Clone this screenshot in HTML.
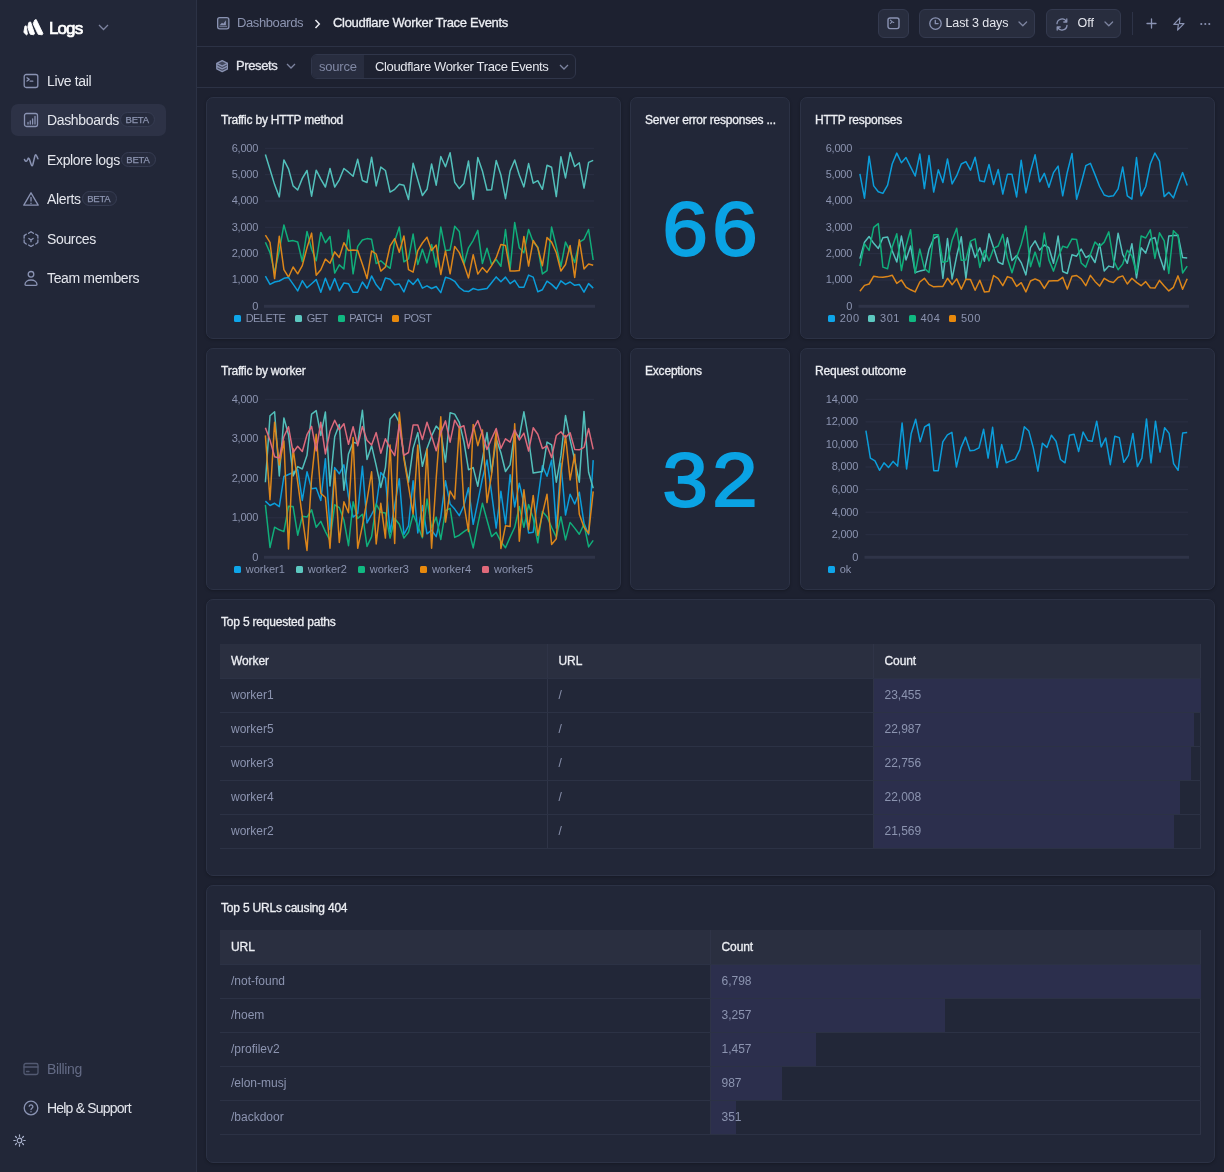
<!DOCTYPE html>
<html><head><meta charset="utf-8"><style>
*{box-sizing:border-box}
html,body{margin:0;padding:0}
body{width:1224px;height:1172px;overflow:hidden;background:#1d2130;font-family:"Liberation Sans",sans-serif;position:relative;color:#e8eaf0}
#side,#hdr,#bar,.panel{will-change:transform}
.abs{position:absolute}
#side{position:absolute;left:0;top:0;width:197px;height:1172px;background:#222738;border-right:1px solid #2c3245}
.logo{position:absolute;left:23px;top:19px}
.logotxt{position:absolute;left:49px;top:19px;font-weight:400;font-size:17px;-webkit-text-stroke:0.7px #fff;letter-spacing:-0.9px;color:#fff;line-height:20px}
.nav{position:absolute;left:11px;width:155px;height:32px;border-radius:7px}
.nav.active{background:#2d3246}
.nav svg{position:absolute;left:12px;top:8px}
.nav .lbl{position:absolute;left:36px;top:8px;font-size:14px;line-height:16px;letter-spacing:-0.35px;color:#e4e6ed;white-space:nowrap}
.beta{display:inline-block;margin-left:1px;border:1px solid #363c52;background:#262b3d;border-radius:8px;font-size:9.5px;-webkit-text-stroke:0.25px #8c94b0;letter-spacing:-0.2px;color:#8c94b0;padding:0 5px 0 4.5px;line-height:13px;height:15px;vertical-align:2px}
#hdr{position:absolute;left:197px;top:0;width:1027px;height:47px;border-bottom:1px solid #2c3245}
#bar{position:absolute;left:197px;top:47px;width:1027px;height:41px;border-bottom:1px solid #2c3245}
.btn{position:absolute;top:9px;height:29px;border:1px solid #343a4f;background:#282d3e;border-radius:6px}
.panel{position:absolute;background:#222738;border:1px solid #2c3245;border-radius:7px;box-shadow:0 1px 3px rgba(0,0,0,0.25)}
.ptitle{position:absolute;left:14px;top:15px;font-size:12px;font-weight:400;-webkit-text-stroke:0.3px #eceef3;letter-spacing:-0.2px;color:#eceef3;white-space:nowrap;line-height:14px}
.tick{font-size:11px;fill:#8c94b0;letter-spacing:-0.25px;font-family:"Liberation Sans",sans-serif}
.legend{position:absolute;left:27px;top:214px;font-size:11px;line-height:13px;color:#8c94b0;white-space:nowrap}
.li{display:inline-block;margin-right:8.2px;letter-spacing:0px}
.li.up{letter-spacing:-0.55px;margin-right:6.8px}
.li.dig{letter-spacing:0.5px;margin-right:5.8px}
.li i{display:inline-block;width:7px;height:7px;border-radius:1.5px;margin-right:4.7px;vertical-align:0px;letter-spacing:0}
.big{position:absolute;left:0;width:158px;text-align:center;font-size:76px;color:#0aa3e4;-webkit-text-stroke:2.1px #0aa3e4;line-height:80px;letter-spacing:4px;text-indent:4px;transform:scaleX(1.07)}
table{border-collapse:collapse;position:absolute;left:13px;table-layout:fixed}
th{background:#2a2f40;color:#eceef3;font-weight:400;-webkit-text-stroke:0.3px #eceef3;font-size:12px;letter-spacing:-0.1px;text-align:left;height:34px;padding:0 0 0 11px;border-bottom:1px solid #2c3245}
td{color:#8c94b0;font-size:12px;height:34px;padding:0 0 0 11px;border-bottom:1px solid #2c3245;position:relative}
td.c{padding:0}
.barw{position:absolute;left:0;top:0;bottom:0;background:#2c2f4d}
.num{position:absolute;left:11px;top:0;line-height:33px}
</style></head><body>
<div id="side"><svg class="abs" style="left:20px;top:15px" width="28" height="24" viewBox="0 0 28 24" fill="#fff" stroke="#fff" stroke-width="0.9" stroke-linejoin="round"><path d="M5 11L6.2 10.9 7.4 19.2 6.6 19.9 4.3 18 3.9 16.9Z"/><path d="M8.9 7.4L10.6 7 14.6 18.8 13.6 19.7 10.4 19.3 9.9 18.4 7.8 12.6 7.8 11.8Z"/><path d="M14.8 5L16.2 4.6 22.9 18.4 22.2 19.8 18.2 19.3 17.8 18.6 13.3 9.1 13.3 8.4Z"/></svg><div class="logotxt">Logs</div><svg class="abs" style="left:98px;top:24px" width="11" height="7" viewBox="0 0 11 7"><path d="M1 1l4.5 4.5L10 1" fill="none" stroke="#7d84a0" stroke-width="1.3"/></svg><div class="nav" style="top:64.5px"><svg width="16" height="16" viewBox="0 0 16 16" fill="none" stroke="#8a93b3" stroke-width="1.3" stroke-linecap="round" stroke-linejoin="round"><rect x="1.2" y="1.5" width="13.6" height="13" rx="2"/><path d="M4 4.8l2.2 1.6L4 8M7.2 8.2h2.6"/></svg><div class="lbl">Live tail</div></div><div class="nav active" style="top:104px"><svg width="16" height="16" viewBox="0 0 16 16" fill="none" stroke="#8a93b3" stroke-width="1.3" stroke-linecap="round" stroke-linejoin="round"><rect x="1.5" y="1.5" width="13" height="13" rx="2"/><path d="M5 12v-1.5M7.3 12V9M9.6 12V6.8M12 12V4.5"/></svg><div class="lbl">Dashboards<span class=beta>BETA</span></div></div><div class="nav" style="top:143.5px"><svg width="16" height="16" viewBox="0 0 16 16" fill="none" stroke="#8a93b3" stroke-width="1.3" stroke-linecap="round" stroke-linejoin="round"><path stroke-width="1.5" d="M1.5 7.4C2.3 9.6 3.6 10.2 4.6 7.6 5.3 5.6 5.9 5.6 6.6 7.8L8.2 12.6C8.7 14.2 9.4 14 9.9 12.2L11.9 4C12.4 2.2 13 2.3 13.6 3.8L14.9 6.8"/></svg><div class="lbl">Explore logs<span class=beta>BETA</span></div></div><div class="nav" style="top:183px"><svg width="16" height="16" viewBox="0 0 16 16" fill="none" stroke="#8a93b3" stroke-width="1.3" stroke-linecap="round" stroke-linejoin="round"><path d="M8 1.8L15.2 14.2H0.8Z"/><path d="M8 6.5v3.5M8 12.2v.2"/></svg><div class="lbl">Alerts<span class=beta>BETA</span></div></div><div class="nav" style="top:222.5px"><svg width="16" height="16" viewBox="0 0 16 16" fill="none" stroke="#8a93b3" stroke-width="1.3" stroke-linecap="round" stroke-linejoin="round"><path d="M5.6 2.3L8 .7l2.4 1.6M3.2 3.2L1.2 4.6 1.1 7.2M12.8 3.2l2 1.4.1 2.6M1.1 8.9l.1 2.6 2 1.5M14.9 8.9l-.1 2.6-2 1.5M5.6 14L8 15.5l2.4-1.5M5.9 7.5L8 9l2.1-1.5M8 9v1.7"/></svg><div class="lbl">Sources</div></div><div class="nav" style="top:262px"><svg width="16" height="16" viewBox="0 0 16 16" fill="none" stroke="#8a93b3" stroke-width="1.3" stroke-linecap="round" stroke-linejoin="round"><circle cx="8" cy="4.3" r="2.8"/><path d="M2 14.5c0-2.8 2.7-4.5 6-4.5s6 1.7 6 4.5c0 .6-.4.8-1 .8H3c-.6 0-1-.2-1-.8z"/></svg><div class="lbl">Team members</div></div><div class="nav" style="top:1053px"><svg width="16" height="16" viewBox="0 0 16 16" fill="none" stroke="#535a72" stroke-width="1.3" stroke-linecap="round" stroke-linejoin="round"><rect x="1" y="2.5" width="14" height="11" rx="1.8"/><path d="M1 6h14M3.5 10.5h2.5"/></svg><div class="lbl" style="color:#646b85">Billing</div></div><div class="nav" style="top:1092px"><svg width="16" height="16" viewBox="0 0 16 16" fill="none" stroke="#8a93b3" stroke-width="1.3" stroke-linecap="round" stroke-linejoin="round"><circle cx="8" cy="8" r="6.8"/><path d="M6.2 6.2a1.9 1.9 0 0 1 3.7.6c0 1.3-1.9 1.6-1.9 2.8M8 11.6v.2"/></svg><div class="lbl" style="letter-spacing:-0.8px">Help &amp; Support</div></div><svg class="abs" style="left:13px;top:1134px" width="13" height="13" viewBox="0 0 13 13" fill="none" stroke="#aab2cc" stroke-width="1.2" stroke-linecap="round"><circle cx="6.5" cy="6.5" r="2.3"/><path d="M6.5 .8v1.5M6.5 10.7v1.5M.8 6.5h1.5M10.7 6.5h1.5M2.5 2.5l1 1M9.5 9.5l1 1M2.5 10.5l1-1M9.5 3.5l1-1"/></svg></div>
<div id="hdr"><svg class="abs" style="left:20px;top:17.3px" width="12.5" height="12.5" viewBox="0 0 12.5 12.5"><rect x=".65" y=".65" width="11.2" height="11.2" rx="2" fill="rgba(138,147,179,0.18)" stroke="#8a93b3" stroke-width="1.3"/><path d="M2.6 8.2L5 5.8l1.3.9 2.6-3.4v4.9z" fill="#8a93b3"/><path d="M2.4 9.4h7.6" stroke="#6d7490" stroke-width="1.1"/></svg><div class="abs" style="left:40px;top:15px;font-size:13px;line-height:15px;color:#8c94b0;letter-spacing:-0.4px">Dashboards</div><svg class="abs" style="left:116.5px;top:18.5px" width="7" height="10" viewBox="0 0 7 10"><path d="M1.5 1l3.8 4-3.8 4" fill="none" stroke="#e8eaf0" stroke-width="1.5"/></svg><div class="abs" style="left:136px;top:15px;font-size:13px;line-height:15px;-webkit-text-stroke:0.3px #eceef3;color:#eceef3;letter-spacing:-0.3px">Cloudflare Worker Trace Events</div><div class="btn" style="left:681px;width:31px"><svg class="abs" style="left:8.2px;top:7.4px" width="13" height="13" viewBox="0 0 13 13" fill="none" stroke="#8a93b3" stroke-width="1.4"><rect x="1" y="1" width="11" height="10.6" rx="2"/><path d="M3.4 3.2l1.8 1.6-1.8 1.6" stroke-width="1.1" stroke-linecap="round"/><path d="M5.6 5.4h1.6" stroke-width="1.1"/></svg></div><div class="btn" style="left:722px;width:116px"><svg class="abs" style="left:8.5px;top:7px" width="13" height="13" viewBox="0 0 13 13" fill="none" stroke="#8a93b3" stroke-width="1.3" stroke-linecap="round"><circle cx="6.5" cy="6.6" r="5.7"/><path d="M6.3 3.4v3.2h2.8"/></svg><div class="abs" style="left:25.5px;top:6px;font-size:12.5px;line-height:15px;color:#e4e6ed;letter-spacing:-0.1px">Last 3 days</div><svg class="abs" style="left:97.7px;top:10.7px" width="10" height="7" viewBox="0 0 10 7"><path d="M1 1l3.8 3.8L8.6 1" fill="none" stroke="#7d84a0" stroke-width="1.3" stroke-linecap="round" stroke-linejoin="round"/></svg></div><div class="btn" style="left:849px;width:75px"><svg class="abs" style="left:7.8px;top:7.7px" width="14" height="13" viewBox="0 0 14 13" fill="none" stroke="#8a93b3" stroke-width="1.3" stroke-linecap="round" stroke-linejoin="round"><path d="M2 5.6A5 5 0 0 1 11.4 3.6M12 7.4A5 5 0 0 1 2.6 9.4M11.8 1v3h-3M2.2 12V9h3"/></svg><div class="abs" style="left:30.5px;top:6px;font-size:12.5px;line-height:15px;color:#e4e6ed">Off</div><svg class="abs" style="left:56.5px;top:10.7px" width="10" height="7" viewBox="0 0 10 7"><path d="M1 1l3.8 3.8L8.6 1" fill="none" stroke="#7d84a0" stroke-width="1.3" stroke-linecap="round" stroke-linejoin="round"/></svg></div><div class="abs" style="left:935px;top:12px;width:1px;height:23px;background:#2d3347"></div><svg class="abs" style="left:948.5px;top:17.8px" width="11" height="11" viewBox="0 0 11 11" stroke="#8a93b3" stroke-width="1.3" stroke-linecap="round"><path d="M5.5 1v9M1 5.5h9"/></svg><svg class="abs" style="left:975.5px;top:16.5px" width="12" height="14" viewBox="0 0 12 14" fill="none" stroke="#8a93b3" stroke-width="1.2" stroke-linejoin="round"><path d="M7 .8L.8 7.4h4.6L4.6 13.2l6.4-6.6H6.4z"/></svg><svg class="abs" style="left:1003px;top:21.5px" width="11" height="4" viewBox="0 0 11 4" fill="#8a93b3"><circle cx="1.3" cy="2" r="1.05"/><circle cx="5.3" cy="2" r="1.05"/><circle cx="9.3" cy="2" r="1.05"/></svg></div>
<div id="bar"><svg class="abs" style="left:19px;top:13.2px" width="12.4" height="12.4" viewBox="0 0 12.4 12.4" fill="none" stroke="#8a93b3" stroke-width="1.35" stroke-linejoin="round"><path d="M.8 3.4V8.8L6.2 11.6 11.6 8.8V3.4L6.2 .7Z" fill="rgba(138,147,179,0.35)"/><path d="M.8 3.4L6.2 6.2 11.6 3.4M.8 6.1L6.2 8.9 11.6 6.1"/></svg><div class="abs" style="left:39px;top:11px;font-size:13px;line-height:15px;-webkit-text-stroke:0.3px #e4e6ed;color:#e4e6ed;letter-spacing:-0.4px">Presets</div><svg class="abs" style="left:89px;top:16px" width="10" height="7" viewBox="0 0 10 7"><path d="M1 1l4 4 4-4" fill="none" stroke="#7d84a0" stroke-width="1.3"/></svg><div class="abs" style="left:114px;top:7px;width:265px;height:25px;border:1px solid #30364a;border-radius:6px;overflow:hidden;background:#1e2231"><div class="abs" style="left:0;top:0;width:52px;height:23px;background:#282d3f"></div><div class="abs" style="left:7px;top:5px;font-size:13px;line-height:14px;color:#8088a4;letter-spacing:-0.2px">source</div><div class="abs" style="left:63px;top:5px;font-size:13px;line-height:14px;color:#e4e6ed;letter-spacing:-0.35px">Cloudflare Worker Trace Events</div><svg class="abs" style="left:247px;top:9px" width="10" height="7" viewBox="0 0 10 7"><path d="M1 1l4 4 4-4" fill="none" stroke="#7d84a0" stroke-width="1.3"/></svg></div></div>
<div class="panel" style="left:206px;top:97px;width:415px;height:242px">
<div class="ptitle">Traffic by HTTP method</div>
<svg width="415" height="242" style="position:absolute;left:-1px;top:-1px;overflow:visible">
<rect x="58.0" y="207.8" width="331.0" height="3" fill="#2f3448"/>
<text x="52.0" y="212.6" text-anchor="end" class="tick">0</text>
<rect x="59.0" y="182.5" width="329.0" height="1" fill="#2b3044"/>
<text x="52.0" y="186.3" text-anchor="end" class="tick">1,000</text>
<rect x="59.0" y="156.1" width="329.0" height="1" fill="#2b3044"/>
<text x="52.0" y="159.9" text-anchor="end" class="tick">2,000</text>
<rect x="59.0" y="129.8" width="329.0" height="1" fill="#2b3044"/>
<text x="52.0" y="133.6" text-anchor="end" class="tick">3,000</text>
<rect x="59.0" y="103.5" width="329.0" height="1" fill="#2b3044"/>
<text x="52.0" y="107.3" text-anchor="end" class="tick">4,000</text>
<rect x="59.0" y="77.1" width="329.0" height="1" fill="#2b3044"/>
<text x="52.0" y="80.9" text-anchor="end" class="tick">5,000</text>
<rect x="59.0" y="50.8" width="329.0" height="1" fill="#2b3044"/>
<text x="52.0" y="54.6" text-anchor="end" class="tick">6,000</text>
<polyline fill="none" stroke="#52c0bb" stroke-width="1.5" stroke-linejoin="round" points="59.4,57.5 64.0,72.5 68.6,87.6 73.3,99.9 77.9,62.9 82.5,71.8 87.1,88.9 91.7,93.0 96.3,81.4 101.0,73.5 105.6,99.2 110.2,73.2 114.8,82.1 119.4,90.0 124.0,71.5 128.7,90.0 133.3,82.8 137.9,71.5 142.5,75.2 147.1,79.3 151.7,62.3 156.4,83.5 161.0,85.5 165.6,60.2 170.2,88.9 174.8,70.1 179.4,73.5 184.1,95.1 188.7,92.3 193.3,87.2 197.9,88.2 202.5,102.6 207.1,66.3 211.8,82.8 216.4,98.5 221.0,92.3 225.6,67.0 230.2,88.2 234.8,59.5 239.5,69.8 244.1,55.8 248.7,85.2 253.3,91.6 257.9,86.5 262.5,64.0 267.2,102.3 271.8,60.5 276.4,73.9 281.0,93.0 285.6,92.7 290.2,63.6 294.9,78.0 299.5,101.7 304.1,74.0 308.7,63.0 313.3,78.0 317.9,89.9 322.6,66.6 327.2,86.2 331.8,83.7 336.4,92.3 341.0,68.3 345.6,70.3 350.3,99.6 354.9,59.7 359.5,80.9 364.1,55.6 368.7,69.5 373.3,65.8 378.0,91.1 382.6,65.4 387.2,63.4"/>
<polyline fill="none" stroke="#10ae7a" stroke-width="1.5" stroke-linejoin="round" points="59.4,145.3 64.0,155.6 68.6,175.4 73.3,153.6 77.9,127.9 82.5,144.3 87.1,143.6 91.7,145.0 96.3,164.5 101.0,134.4 105.6,152.2 110.2,163.8 114.8,135.4 119.4,145.7 124.0,139.5 128.7,176.1 133.3,167.9 137.9,172.0 142.5,133.0 147.1,176.8 151.7,149.4 156.4,143.0 161.0,141.6 165.6,142.3 170.2,166.6 174.8,163.8 179.4,167.9 184.1,171.3 188.7,144.0 193.3,130.0 197.9,164.8 202.5,161.8 207.1,137.1 211.8,167.6 216.4,152.2 221.0,165.9 225.6,147.4 230.2,170.0 234.8,130.0 239.5,153.6 244.1,152.9 248.7,129.3 253.3,134.4 257.9,167.2 262.5,150.8 267.2,143.3 271.8,133.4 276.4,166.6 281.0,151.2 285.6,167.6 290.2,162.5 294.9,169.3 299.5,132.5 304.1,172.0 308.7,125.6 313.3,150.8 317.9,155.7 322.6,132.5 327.2,145.1 331.8,150.0 336.4,176.9 341.0,173.6 345.6,130.1 350.3,149.2 354.9,169.5 359.5,145.1 364.1,154.5 368.7,165.5 373.3,145.1 378.0,142.3 382.6,132.5 387.2,163.0"/>
<polyline fill="none" stroke="#dc861a" stroke-width="1.5" stroke-linejoin="round" points="59.4,138.2 64.0,145.3 68.6,181.6 73.3,139.2 77.9,172.7 82.5,180.2 87.1,170.0 91.7,176.8 96.3,168.6 101.0,150.8 105.6,136.1 110.2,178.2 114.8,172.7 119.4,162.1 124.0,166.2 128.7,154.9 133.3,160.4 137.9,145.7 142.5,153.6 147.1,152.9 151.7,153.6 156.4,167.2 161.0,181.6 165.6,153.9 170.2,157.0 174.8,174.1 179.4,170.0 184.1,148.8 188.7,141.6 193.3,155.3 197.9,138.9 202.5,172.7 207.1,175.1 211.8,153.6 216.4,146.0 221.0,140.2 225.6,153.6 230.2,148.1 234.8,177.5 239.5,153.9 244.1,176.8 248.7,149.4 253.3,155.6 257.9,167.2 262.5,180.9 267.2,157.7 271.8,177.1 276.4,170.6 281.0,175.4 285.6,168.6 290.2,160.7 294.9,147.4 299.5,148.4 304.1,174.0 308.7,174.0 313.3,173.6 317.9,139.4 322.6,169.1 327.2,143.5 331.8,150.8 336.4,168.7 341.0,140.6 345.6,145.1 350.3,155.7 354.9,174.0 359.5,167.5 364.1,148.4 368.7,180.5 373.3,142.7 378.0,172.0 382.6,167.1 387.2,168.3"/>
<polyline fill="none" stroke="#0b9dda" stroke-width="1.5" stroke-linejoin="round" points="59.4,179.2 64.0,187.4 68.6,185.0 73.3,184.0 77.9,181.3 82.5,180.6 87.1,187.1 91.7,193.9 96.3,183.7 101.0,190.8 105.6,186.7 110.2,182.6 114.8,195.3 119.4,181.3 124.0,192.9 128.7,181.6 133.3,193.9 137.9,186.0 142.5,186.7 147.1,195.3 151.7,195.3 156.4,185.0 161.0,191.5 165.6,178.9 170.2,187.8 174.8,193.2 179.4,180.9 184.1,182.3 188.7,187.8 193.3,187.1 197.9,194.9 202.5,183.0 207.1,187.4 211.8,181.9 216.4,191.2 221.0,188.8 225.6,191.5 230.2,189.5 234.8,195.6 239.5,180.2 244.1,181.6 248.7,184.3 253.3,190.5 257.9,193.9 262.5,194.6 267.2,191.5 271.8,192.9 276.4,192.2 281.0,191.5 285.6,185.7 290.2,179.9 294.9,184.7 299.5,180.1 304.1,186.6 308.7,183.4 313.3,190.3 317.9,190.3 322.6,178.1 327.2,180.1 331.8,194.8 336.4,192.7 341.0,184.2 345.6,187.4 350.3,191.9 354.9,183.8 359.5,187.4 364.1,185.0 368.7,188.3 373.3,187.4 378.0,195.2 382.6,186.6 387.2,191.1"/>
</svg>
<div class="legend">
<span class="li up"><i style="background:#0ea5e9"></i>DELETE</span>
<span class="li up"><i style="background:#5cc8c0"></i>GET</span>
<span class="li up"><i style="background:#10b981"></i>PATCH</span>
<span class="li up"><i style="background:#e8890c"></i>POST</span>
</div>
</div>
<div class="panel" style="left:800px;top:97px;width:415px;height:242px">
<div class="ptitle">HTTP responses</div>
<svg width="415" height="242" style="position:absolute;left:-1px;top:-1px;overflow:visible">
<rect x="58.5" y="207.8" width="330.5" height="3" fill="#2f3448"/>
<text x="52.0" y="212.6" text-anchor="end" class="tick">0</text>
<rect x="59.5" y="182.5" width="328.5" height="1" fill="#2b3044"/>
<text x="52.0" y="186.3" text-anchor="end" class="tick">1,000</text>
<rect x="59.5" y="156.1" width="328.5" height="1" fill="#2b3044"/>
<text x="52.0" y="159.9" text-anchor="end" class="tick">2,000</text>
<rect x="59.5" y="129.8" width="328.5" height="1" fill="#2b3044"/>
<text x="52.0" y="133.6" text-anchor="end" class="tick">3,000</text>
<rect x="59.5" y="103.5" width="328.5" height="1" fill="#2b3044"/>
<text x="52.0" y="107.3" text-anchor="end" class="tick">4,000</text>
<rect x="59.5" y="77.1" width="328.5" height="1" fill="#2b3044"/>
<text x="52.0" y="80.9" text-anchor="end" class="tick">5,000</text>
<rect x="59.5" y="50.8" width="328.5" height="1" fill="#2b3044"/>
<text x="52.0" y="54.6" text-anchor="end" class="tick">6,000</text>
<polyline fill="none" stroke="#0b9dda" stroke-width="1.5" stroke-linejoin="round" points="59.9,76.9 64.5,101.2 69.1,59.2 73.7,88.9 78.3,94.7 82.9,96.4 87.6,88.2 92.2,67.0 96.8,56.1 101.4,65.7 106.0,60.5 110.6,69.8 115.2,79.0 119.8,57.1 124.4,91.6 129.0,58.5 133.7,95.1 138.3,72.8 142.9,85.5 147.5,61.9 152.1,86.9 156.7,78.7 161.3,67.0 165.9,64.6 170.5,73.2 175.1,60.2 179.8,83.8 184.4,84.8 189.0,67.4 193.6,87.6 198.2,72.5 202.8,97.1 207.4,77.3 212.0,77.3 216.6,99.9 221.2,63.3 225.9,95.8 230.5,74.6 235.1,57.8 239.7,84.8 244.3,76.3 248.9,90.3 253.5,75.6 258.1,69.1 262.7,98.8 267.3,75.2 272.0,56.4 276.6,102.3 281.2,86.2 285.8,68.7 290.4,66.3 295.0,77.6 299.6,89.5 304.2,98.0 308.8,99.6 313.4,98.8 318.1,91.9 322.7,69.9 327.3,98.8 331.9,102.1 336.5,60.5 341.1,98.8 345.7,89.5 350.3,67.0 354.9,56.0 359.5,64.2 364.2,99.6 368.8,95.2 373.4,100.9 378.0,87.8 382.6,75.6 387.2,88.6"/>
<polyline fill="none" stroke="#52c0bb" stroke-width="1.5" stroke-linejoin="round" points="59.9,161.6 64.5,145.3 69.1,139.5 73.7,146.3 78.3,151.4 82.9,140.8 87.6,140.1 92.2,153.7 96.8,165.0 101.4,139.1 106.0,162.9 110.6,149.0 115.2,175.5 119.8,174.1 124.4,173.1 129.0,152.4 133.7,141.5 138.3,138.8 142.9,181.3 147.5,141.5 152.1,181.9 156.7,158.8 161.3,139.8 165.9,181.6 170.5,145.6 175.1,160.5 179.8,150.7 184.4,164.3 189.0,136.8 193.6,150.7 198.2,165.0 202.8,167.3 207.4,140.8 212.0,163.6 216.6,158.5 221.2,165.6 225.9,177.9 230.5,150.7 235.1,143.9 239.7,153.1 244.3,148.0 248.9,150.7 253.5,166.3 258.1,139.1 262.7,174.5 267.3,176.5 272.0,157.8 276.6,159.2 281.2,152.1 285.8,160.5 290.4,158.0 295.0,165.5 299.6,146.7 304.2,174.0 308.8,169.1 313.4,170.4 318.1,136.2 322.7,157.3 327.3,166.3 331.9,146.7 336.5,180.9 341.1,150.8 345.7,156.1 350.3,142.3 354.9,140.6 359.5,159.0 364.2,172.8 368.8,139.0 373.4,138.6 378.0,138.2 382.6,160.6 387.2,161.0"/>
<polyline fill="none" stroke="#10ae7a" stroke-width="1.5" stroke-linejoin="round" points="59.9,169.0 64.5,146.9 69.1,153.4 73.7,130.3 78.3,126.6 82.9,170.1 87.6,171.7 92.2,150.0 96.8,136.8 101.4,173.5 106.0,149.3 110.6,132.7 115.2,176.2 119.8,152.1 124.4,171.4 129.0,175.5 133.7,137.8 138.3,137.8 142.9,165.3 147.5,164.3 152.1,143.2 156.7,131.3 161.3,163.3 165.9,162.9 170.5,144.2 175.1,141.9 179.8,170.4 184.4,153.4 189.0,163.9 193.6,151.4 198.2,149.0 202.8,137.4 207.4,161.6 212.0,175.8 216.6,160.5 221.2,147.3 225.9,128.9 230.5,169.7 235.1,155.1 239.7,169.7 244.3,136.1 248.9,162.9 253.5,174.1 258.1,160.5 262.7,149.3 267.3,150.7 272.0,141.9 276.6,142.5 281.2,166.0 285.8,170.1 290.4,157.5 295.0,145.0 299.6,149.6 304.2,145.1 308.8,134.9 313.4,163.0 318.1,172.8 322.7,167.1 327.3,153.3 331.9,159.0 336.5,176.0 341.1,139.0 345.7,141.0 350.3,132.9 354.9,161.4 359.5,135.8 364.2,143.9 368.8,176.5 373.4,133.7 378.0,138.2 382.6,176.0 387.2,169.1"/>
<polyline fill="none" stroke="#dc861a" stroke-width="1.5" stroke-linejoin="round" points="59.9,194.2 64.5,188.4 69.1,187.0 73.7,179.2 78.3,179.9 82.9,180.3 87.6,179.6 92.2,178.2 96.8,186.4 101.4,183.0 106.0,190.1 110.6,192.8 115.2,194.9 119.8,185.0 124.4,181.3 129.0,187.4 133.7,189.8 138.3,189.4 142.9,189.4 147.5,181.3 152.1,187.7 156.7,181.9 161.3,192.1 165.9,182.3 170.5,182.6 175.1,193.2 179.8,183.3 184.4,194.9 189.0,194.5 193.6,178.5 198.2,181.6 202.8,188.7 207.4,179.6 212.0,181.3 216.6,189.4 221.2,185.7 225.9,194.9 230.5,184.0 235.1,181.9 239.7,184.0 244.3,191.4 248.9,184.0 253.5,183.7 258.1,183.7 262.7,180.3 267.3,192.1 272.0,179.2 276.6,178.5 281.2,181.9 285.8,188.7 290.4,178.4 295.0,184.4 299.6,189.1 304.2,181.3 308.8,184.2 313.4,185.4 318.1,180.5 322.7,178.9 327.3,187.0 331.9,181.3 336.5,185.4 341.1,188.7 345.7,184.6 350.3,190.7 354.9,191.1 359.5,183.4 364.2,189.1 368.8,193.9 373.4,190.3 378.0,178.9 382.6,192.3 387.2,181.8"/>
</svg>
<div class="legend">
<span class="li dig"><i style="background:#0ea5e9"></i>200</span>
<span class="li dig"><i style="background:#5cc8c0"></i>301</span>
<span class="li dig"><i style="background:#10b981"></i>404</span>
<span class="li dig"><i style="background:#e8890c"></i>500</span>
</div>
</div>
<div class="panel" style="left:206px;top:348px;width:415px;height:242px">
<div class="ptitle">Traffic by worker</div>
<svg width="415" height="242" style="position:absolute;left:-1px;top:-1px;overflow:visible">
<rect x="58.0" y="207.8" width="331.0" height="3" fill="#2f3448"/>
<text x="52.0" y="212.6" text-anchor="end" class="tick">0</text>
<rect x="59.0" y="169.3" width="329.0" height="1" fill="#2b3044"/>
<text x="52.0" y="173.1" text-anchor="end" class="tick">1,000</text>
<rect x="59.0" y="129.8" width="329.0" height="1" fill="#2b3044"/>
<text x="52.0" y="133.6" text-anchor="end" class="tick">2,000</text>
<rect x="59.0" y="90.3" width="329.0" height="1" fill="#2b3044"/>
<text x="52.0" y="94.1" text-anchor="end" class="tick">3,000</text>
<rect x="59.0" y="50.8" width="329.0" height="1" fill="#2b3044"/>
<text x="52.0" y="54.6" text-anchor="end" class="tick">4,000</text>
<polyline fill="none" stroke="#0b9dda" stroke-width="1.5" stroke-linejoin="round" points="59.4,153.1 64.0,157.5 68.6,155.3 73.3,158.6 77.9,128.5 82.5,126.5 87.1,124.5 91.7,121.7 96.3,152.4 101.0,123.8 105.6,140.8 110.2,140.1 114.8,152.4 119.4,110.7 124.0,181.4 128.7,119.6 133.3,125.8 137.9,116.9 142.5,148.8 147.1,169.1 151.7,165.5 156.4,118.3 161.0,174.9 165.6,166.5 170.2,157.5 174.8,124.5 179.4,129.9 184.1,184.3 188.7,157.5 193.3,130.7 197.9,186.5 202.5,177.8 207.1,132.8 211.8,185.0 216.4,157.5 221.0,185.8 225.6,182.1 230.2,188.6 234.8,169.1 239.5,132.8 244.1,156.0 248.7,161.1 253.3,167.6 257.9,157.5 262.5,139.7 267.2,176.3 271.8,153.8 276.4,130.7 281.0,112.1 285.6,145.2 290.2,180.1 294.9,143.3 299.5,176.0 304.1,126.7 308.7,158.9 313.3,135.2 317.9,155.6 322.6,185.0 327.2,184.2 331.8,151.5 336.4,117.8 341.0,128.3 345.6,112.1 350.3,180.1 354.9,115.3 359.5,167.0 364.1,146.2 368.7,156.0 373.3,144.2 378.0,175.2 382.6,186.6 387.2,112.1"/>
<polyline fill="none" stroke="#52c0bb" stroke-width="1.5" stroke-linejoin="round" points="59.4,134.2 64.0,67.8 68.6,63.7 73.3,127.9 77.9,69.9 82.5,86.7 87.1,127.9 91.7,118.6 96.3,121.0 101.0,107.3 105.6,66.1 110.2,62.6 114.8,87.4 119.4,64.0 124.0,137.9 128.7,88.7 133.3,76.4 137.9,142.3 142.5,105.9 147.1,94.2 151.7,95.6 156.4,62.3 161.0,111.4 165.6,97.7 170.2,117.6 174.8,139.4 179.4,119.6 184.1,70.9 188.7,65.7 193.3,74.3 197.9,108.7 202.5,134.2 207.1,100.4 211.8,84.6 216.4,118.3 221.0,100.4 225.6,88.0 230.2,78.1 234.8,83.3 239.5,114.1 244.1,64.7 248.7,66.1 253.3,74.3 257.9,93.6 262.5,121.7 267.2,119.6 271.8,138.2 276.4,111.4 281.0,84.6 285.6,124.5 290.2,90.8 294.9,104.7 299.5,123.5 304.1,116.9 308.7,84.3 313.3,89.2 317.9,63.8 322.6,90.8 327.2,125.1 331.8,124.3 336.4,123.5 341.0,94.1 345.6,96.9 350.3,134.2 354.9,107.9 359.5,67.5 364.1,91.6 368.7,112.1 373.3,134.2 378.0,63.4 382.6,124.3 387.2,140.2"/>
<polyline fill="none" stroke="#10ae7a" stroke-width="1.5" stroke-linejoin="round" points="59.4,156.8 64.0,199.5 68.6,179.2 73.3,181.8 77.9,183.6 82.5,158.2 87.1,158.6 91.7,187.2 96.3,168.3 101.0,169.1 105.6,161.8 110.2,179.2 114.8,173.4 119.4,183.6 124.0,192.3 128.7,156.8 133.3,159.6 137.9,172.0 142.5,197.7 147.1,153.8 151.7,170.5 156.4,166.2 161.0,198.4 165.6,188.6 170.2,156.0 174.8,164.3 179.4,165.1 184.1,190.1 188.7,170.5 193.3,176.3 197.9,190.1 202.5,184.3 207.1,166.2 211.8,177.8 216.4,189.7 221.0,151.0 225.6,180.0 230.2,169.1 234.8,191.5 239.5,162.6 244.1,160.4 248.7,189.4 253.3,187.2 257.9,183.6 262.5,180.7 267.2,199.9 271.8,176.3 276.4,155.3 281.0,172.0 285.6,188.6 290.2,184.3 294.9,193.7 299.5,199.7 304.1,189.1 308.7,179.3 313.3,158.5 317.9,179.3 322.6,156.4 327.2,170.3 331.8,194.8 336.4,163.4 341.0,168.7 345.6,179.3 350.3,189.1 354.9,168.7 359.5,191.9 364.1,174.4 368.7,180.1 373.3,186.2 378.0,176.0 382.6,198.9 387.2,192.4"/>
<polyline fill="none" stroke="#dc861a" stroke-width="1.5" stroke-linejoin="round" points="59.4,87.4 64.0,151.7 68.6,74.3 73.3,116.9 77.9,92.9 82.5,201.0 87.1,100.4 91.7,134.2 96.3,168.4 101.0,202.4 105.6,130.3 110.2,86.3 114.8,145.2 119.4,149.5 124.0,200.3 128.7,122.4 133.3,194.4 137.9,153.8 142.5,164.7 147.1,89.4 151.7,200.3 156.4,177.7 161.0,152.4 165.6,123.8 170.2,195.9 174.8,155.3 179.4,190.1 184.1,97.0 188.7,195.5 193.3,64.3 197.9,110.6 202.5,138.2 207.1,165.9 211.8,97.0 216.4,188.6 221.0,101.1 225.6,200.3 230.2,130.3 234.8,68.8 239.5,174.1 244.1,143.0 248.7,151.0 253.3,78.4 257.9,156.0 262.5,183.6 267.2,76.4 271.8,97.7 276.4,81.9 281.0,154.6 285.6,126.4 290.2,82.5 294.9,200.5 299.5,177.7 304.1,178.5 308.7,75.7 313.3,193.2 317.9,141.7 322.6,181.7 327.2,147.4 331.8,187.5 336.4,166.2 341.0,146.2 345.6,196.4 350.3,190.7 354.9,126.4 359.5,87.5 364.1,131.9 368.7,106.3 373.3,166.2 378.0,179.3 382.6,185.4 387.2,143.3"/>
<polyline fill="none" stroke="#dc6a7c" stroke-width="1.5" stroke-linejoin="round" points="59.4,79.8 64.0,92.2 68.6,108.7 73.3,110.0 77.9,88.7 82.5,78.8 87.1,104.5 91.7,98.3 96.3,103.5 101.0,86.7 105.6,78.4 110.2,102.8 114.8,74.3 119.4,105.9 124.0,83.3 128.7,72.2 133.3,81.9 137.9,75.7 142.5,96.3 147.1,78.8 151.7,97.7 156.4,78.4 161.0,92.2 165.6,97.0 170.2,84.6 174.8,105.2 179.4,90.8 184.1,100.4 188.7,107.6 193.3,76.4 197.9,107.3 202.5,104.5 207.1,77.1 211.8,77.1 216.4,91.5 221.0,74.3 225.6,88.0 230.2,102.8 234.8,84.6 239.5,72.9 244.1,94.2 248.7,72.2 253.3,79.8 257.9,77.8 262.5,100.4 267.2,81.2 271.8,72.6 276.4,86.0 281.0,101.5 285.6,90.8 290.2,80.5 294.9,100.4 299.5,90.8 304.1,94.1 308.7,81.8 313.3,92.0 317.9,85.1 322.6,103.0 327.2,79.8 331.8,86.3 336.4,100.6 341.0,97.8 345.6,109.6 350.3,87.5 354.9,83.8 359.5,89.6 364.1,84.7 368.7,101.4 373.3,101.8 378.0,99.4 382.6,80.6 387.2,101.4"/>
</svg>
<div class="legend">
<span class="li"><i style="background:#0ea5e9"></i>worker1</span>
<span class="li"><i style="background:#5cc8c0"></i>worker2</span>
<span class="li"><i style="background:#10b981"></i>worker3</span>
<span class="li"><i style="background:#e8890c"></i>worker4</span>
<span class="li"><i style="background:#e0697a"></i>worker5</span>
</div>
</div>
<div class="panel" style="left:800px;top:348px;width:415px;height:242px">
<div class="ptitle">Request outcome</div>
<svg width="415" height="242" style="position:absolute;left:-1px;top:-1px;overflow:visible">
<rect x="64.5" y="207.8" width="324.5" height="3" fill="#2f3448"/>
<text x="58.0" y="212.6" text-anchor="end" class="tick">0</text>
<rect x="65.5" y="186.2" width="322.5" height="1" fill="#2b3044"/>
<text x="58.0" y="190.0" text-anchor="end" class="tick">2,000</text>
<rect x="65.5" y="163.7" width="322.5" height="1" fill="#2b3044"/>
<text x="58.0" y="167.5" text-anchor="end" class="tick">4,000</text>
<rect x="65.5" y="141.1" width="322.5" height="1" fill="#2b3044"/>
<text x="58.0" y="144.9" text-anchor="end" class="tick">6,000</text>
<rect x="65.5" y="118.5" width="322.5" height="1" fill="#2b3044"/>
<text x="58.0" y="122.3" text-anchor="end" class="tick">8,000</text>
<rect x="65.5" y="95.9" width="322.5" height="1" fill="#2b3044"/>
<text x="58.0" y="99.7" text-anchor="end" class="tick">10,000</text>
<rect x="65.5" y="73.4" width="322.5" height="1" fill="#2b3044"/>
<text x="58.0" y="77.2" text-anchor="end" class="tick">12,000</text>
<rect x="65.5" y="50.8" width="322.5" height="1" fill="#2b3044"/>
<text x="58.0" y="54.6" text-anchor="end" class="tick">14,000</text>
<polyline fill="none" stroke="#0b9dda" stroke-width="1.5" stroke-linejoin="round" points="65.9,82.6 70.4,110.1 75.0,112.9 79.5,122.3 84.0,114.8 88.5,119.5 93.1,113.4 97.6,118.1 102.1,75.1 106.6,120.9 111.2,85.4 115.7,71.3 120.2,93.8 124.7,78.8 129.3,76.0 133.8,122.7 138.3,122.7 142.8,93.8 147.4,86.8 151.9,84.4 156.4,119.0 160.9,99.9 165.5,89.1 170.0,102.7 174.5,102.2 179.0,99.9 183.6,81.2 188.1,110.1 192.6,79.3 197.1,119.5 201.7,96.6 206.2,114.8 210.7,112.9 215.2,111.1 219.8,101.7 224.3,78.8 228.8,83.0 233.3,99.9 237.9,123.2 242.4,95.2 246.9,99.4 251.4,87.2 256.0,93.3 260.5,111.5 265.0,114.8 269.5,87.2 274.1,86.3 278.6,103.6 283.1,84.0 287.6,92.4 292.2,93.3 296.7,73.2 301.2,98.9 305.7,90.0 310.3,116.7 314.8,88.2 319.3,89.6 323.8,114.3 328.4,107.3 332.9,85.4 337.4,118.6 341.9,110.1 346.5,70.9 351.0,114.8 355.5,73.2 360.0,104.1 364.6,79.8 369.1,85.4 373.6,115.7 378.1,122.3 382.7,84.9 387.2,84.4"/>
</svg>
<div class="legend">
<span class="li"><i style="background:#0ea5e9"></i>ok</span>
</div>
</div>
<div class="panel" style="left:630px;top:97px;width:160px;height:242px"><div class="ptitle">Server error responses ...</div><div class="big" style="top:90.5px">66</div></div><div class="panel" style="left:630px;top:348px;width:160px;height:242px"><div class="ptitle">Exceptions</div><div class="big" style="top:90.5px">32</div></div>
<div class="panel" style="left:206px;top:599px;width:1009px;height:277px"><div class="ptitle">Top 5 requested paths</div>
<table style="top:44px;width:980px"><colgroup><col style="width:327px"><col style="width:326px"><col style="width:327px"></colgroup>
<tr><th style="border-right:1px solid #2f3447">Worker</th><th style="border-right:1px solid #2f3447">URL</th><th style="border-right:1px solid #2f3447">Count</th></tr>
<tr><td style="border-right:1px solid #2f3447">worker1</td><td style="border-right:1px solid #2f3447">/</td><td class="c" style="border-right:1px solid #2f3447"><div class="barw" style="width:327.0px"></div><span class="num">23,455</span></td></tr>
<tr><td style="border-right:1px solid #2f3447">worker5</td><td style="border-right:1px solid #2f3447">/</td><td class="c" style="border-right:1px solid #2f3447"><div class="barw" style="width:320.5px"></div><span class="num">22,987</span></td></tr>
<tr><td style="border-right:1px solid #2f3447">worker3</td><td style="border-right:1px solid #2f3447">/</td><td class="c" style="border-right:1px solid #2f3447"><div class="barw" style="width:317.3px"></div><span class="num">22,756</span></td></tr>
<tr><td style="border-right:1px solid #2f3447">worker4</td><td style="border-right:1px solid #2f3447">/</td><td class="c" style="border-right:1px solid #2f3447"><div class="barw" style="width:306.8px"></div><span class="num">22,008</span></td></tr>
<tr><td style="border-right:1px solid #2f3447">worker2</td><td style="border-right:1px solid #2f3447">/</td><td class="c" style="border-right:1px solid #2f3447"><div class="barw" style="width:300.7px"></div><span class="num">21,569</span></td></tr>
</table></div>
<div class="panel" style="left:206px;top:885px;width:1009px;height:278px"><div class="ptitle">Top 5 URLs causing 404</div>
<table style="top:44px;width:980px"><colgroup><col style="width:490px"><col style="width:490px"></colgroup>
<tr><th style="border-right:1px solid #2f3447">URL</th><th style="border-right:1px solid #2f3447">Count</th></tr>
<tr><td style="border-right:1px solid #2f3447">/not-found</td><td class="c" style="border-right:1px solid #2f3447"><div class="barw" style="width:490.0px"></div><span class="num">6,798</span></td></tr>
<tr><td style="border-right:1px solid #2f3447">/hoem</td><td class="c" style="border-right:1px solid #2f3447"><div class="barw" style="width:234.8px"></div><span class="num">3,257</span></td></tr>
<tr><td style="border-right:1px solid #2f3447">/profilev2</td><td class="c" style="border-right:1px solid #2f3447"><div class="barw" style="width:105.0px"></div><span class="num">1,457</span></td></tr>
<tr><td style="border-right:1px solid #2f3447">/elon-musj</td><td class="c" style="border-right:1px solid #2f3447"><div class="barw" style="width:71.1px"></div><span class="num">987</span></td></tr>
<tr><td style="border-right:1px solid #2f3447">/backdoor</td><td class="c" style="border-right:1px solid #2f3447"><div class="barw" style="width:25.3px"></div><span class="num">351</span></td></tr>
</table></div>
</body></html>
